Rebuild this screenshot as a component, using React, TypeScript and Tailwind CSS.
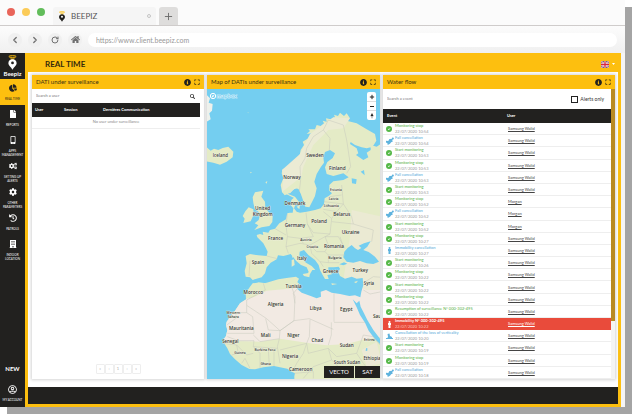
import React, { useState } from "react";
import type { IconType } from "react-icons";
import {
    FaBuilding,
    FaChartPie,
    FaCog,
    FaCogs,
    FaExpand,
    FaFile,
    FaHistory,
    FaHome,
    FaInfoCircle,
    FaMobileAlt,
    FaRegUserCircle,
    FaSearch
} from "react-icons/fa";
import { ChevronLeft, ChevronRight, Plus, RotateCw } from "lucide-react";

type EventKind = "go" | "fall" | "still" | "alert" | "lost";

interface IEvent {
    kind: EventKind;
    label: string;
    date: string;
    user: string;
}

const WALID = "Samsung Walid";

const events: IEvent[] = [
    { kind: "go", label: "Monitoring stop", date: "22/07/2020 10:54", user: WALID },
    { kind: "fall", label: "Fall cancellation", date: "22/07/2020 10:54", user: WALID },
    { kind: "go", label: "Start monitoring", date: "22/07/2020 10:53", user: WALID },
    { kind: "go", label: "Monitoring stop", date: "22/07/2020 10:53", user: WALID },
    { kind: "fall", label: "Fall cancellation", date: "22/07/2020 10:53", user: WALID },
    { kind: "go", label: "Start monitoring", date: "22/07/2020 10:53", user: WALID },
    { kind: "go", label: "Monitoring stop", date: "22/07/2020 10:52", user: "Morgan" },
    { kind: "fall", label: "Fall cancellation", date: "22/07/2020 10:52", user: "Morgan" },
    { kind: "go", label: "Start monitoring", date: "22/07/2020 10:52", user: "Morgan" },
    { kind: "go", label: "Monitoring stop", date: "22/07/2020 10:27", user: WALID },
    { kind: "still", label: "Immobility cancellation", date: "22/07/2020 10:27", user: WALID },
    { kind: "go", label: "Start monitoring", date: "22/07/2020 10:26", user: WALID },
    { kind: "go", label: "Monitoring stop", date: "22/07/2020 10:22", user: WALID },
    { kind: "go", label: "Start monitoring", date: "22/07/2020 10:22", user: WALID },
    { kind: "go", label: "Monitoring stop", date: "22/07/2020 10:22", user: WALID },
    { kind: "go", label: "Resumption of surveillance N° 000-302-495", date: "22/07/2020 10:22", user: WALID },
    { kind: "alert", label: "Immobility N° 000-302-495", date: "22/07/2020 10:22", user: WALID },
    { kind: "lost", label: "Cancellation of the loss of verticality", date: "22/07/2020 10:20", user: WALID },
    { kind: "go", label: "Start monitoring", date: "22/07/2020 10:19", user: WALID },
    { kind: "go", label: "Monitoring stop", date: "22/07/2020 10:19", user: WALID },
    { kind: "fall", label: "Fall cancellation", date: "22/07/2020 10:18", user: WALID }
];

const kindColors: Record<EventKind, string> = {
    go: "text-[#4fae3c]",
    fall: "text-[#4fa8d8]",
    still: "text-[#4fa8d8]",
    alert: "text-white font-bold",
    lost: "text-[#4fa8d8]"
};

const menu: { label: string; Icon: IconType; active?: boolean }[] = [
    { label: "REAL TIME", Icon: FaChartPie, active: true },
    { label: "REPORTS", Icon: FaFile },
    { label: "APPS MANAGEMENT", Icon: FaMobileAlt },
    { label: "SETTING UP ALERTS", Icon: FaCogs },
    { label: "OTHER PARAMETERS", Icon: FaCog },
    { label: "PATROLS", Icon: FaHistory },
    { label: "INDOOR LOCATION", Icon: FaBuilding }
];

const BeeLogo = ({ body, className }: { body: string; className: string }) => (
    <svg viewBox="0 0 24 32" className={className} aria-hidden="true">
        <ellipse cx="12" cy="3" rx="8" ry="2" fill="none" stroke="#fdbf0f" strokeWidth="2" />
        <path d="M7 7h10l-2 3H9z" fill="#fdbf0f" />
        <path
            d="M12 9c-5 0-9 3.6-9 8.5C3 22.5 8.500 25 12 32c3.500-7 9-9.500 9-14.500C21 12.600 17 9 12 9z"
            fill={body}
        />
        <circle cx="12" cy="17" r="3" fill={body === "#ffffff" ? "#22211f" : "#ffffff"} />
    </svg>
);

const EventIcon = ({ kind }: { kind: EventKind }) => {
    if (kind === "go")
        return (
            <svg viewBox="0 0 12 12" className="size-[6px]" aria-hidden="true">
                <circle cx="6" cy="6" r="6" fill="#55b848" />
                <path d="M4 6l2 1.500 2-3" fill="none" stroke="#fff" strokeWidth="1.500" />
            </svg>
        );
    if (kind === "fall")
        return (
            <svg viewBox="0 0 14 14" className="size-[8px]" aria-hidden="true">
                <circle cx="12" cy="2.500" r="1.800" fill="#5fb3de" />
                <path d="M0 6.500l4 .5 2-3.500 6-.5-1 3 1 2-3 1-2 3-4 2-.5-3L0 9.500z" fill="#5fb3de" />
            </svg>
        );
    if (kind === "lost")
        return (
            <svg viewBox="0 0 14 14" className="size-[7px]" aria-hidden="true">
                <path d="M3 2l4-1 1 5 4 2v2H3l1-3z" fill="#5fb3de" />
                <path d="M0 10h14v2H0z" fill="#5fb3de" />
            </svg>
        );
    const fill = kind === "alert" ? "#fff" : "#5fb3de";
    return (
        <svg viewBox="0 0 14 14" className="size-[7px]" aria-hidden="true">
            <circle cx="7" cy="2" r="2" fill={fill} />
            <path d="M4 4h6v4H9v6H5V8H4z" fill={fill} />
        </svg>
    );
};

const EuropeMap = () => {
    // [x, y, text, size]
    const labels: [number, number, string, number][] = [
        [61, 261, "Iceland", 13],
        [345, 262, "Sweden", 14],
        [412, 301, "Finland", 14],
        [276, 326, "Norway", 14],
        [408, 364, "Estonia", 10],
        [401, 391, "Latvia", 10],
        [394, 412, "Lithuania", 10],
        [285, 406, "Denmark", 14],
        [188, 421, "United", 14],
        [188, 438, "Kingdom", 14],
        [425, 439, "Belarus", 14],
        [357, 458, "Poland", 14],
        [285, 470, "Germany", 14],
        [452, 493, "Ukraine", 14],
        [227, 510, "France", 14],
        [318, 512, "Austria", 10],
        [337, 535, "Croatia", 10],
        [402, 533, "Romania", 14],
        [405, 566, "Bulgaria", 10],
        [306, 570, "Italy", 14],
        [174, 582, "Spain", 14],
        [392, 610, "Greece", 14],
        [481, 606, "Turkey", 14],
        [507, 645, "Syria", 13],
        [281, 654, "Tunisia", 14],
        [160, 671, "Morocco", 14],
        [227, 709, "Algeria", 14],
        [347, 719, "Libya", 14],
        [439, 724, "Egypt", 14],
        [100, 732, "Western", 10],
        [100, 744, "Sahara", 10],
        [124, 781, "Mauritania", 14],
        [197, 801, "Mali", 14],
        [280, 800, "Niger", 14],
        [352, 817, "Chad", 14],
        [440, 830, "Sudan", 14],
        [508, 813, "Eritrea", 10],
        [531, 743, "Sau", 14],
        [91, 819, "Senegal", 13],
        [195, 842, "Burkina Faso", 10],
        [120, 853, "Guinea", 10],
        [197, 884, "Ghana", 10],
        [270, 864, "Nigeria", 14],
        [441, 882, "South Sudan", 13],
        [516, 871, "Ethiopia", 13],
        [302, 902, "Cameroon", 14]
    ];

    return (
        <svg
            viewBox="21 57 519 870"
            preserveAspectRatio="xMidYMin slice"
            className="absolute inset-0 size-full"
            role="img"
            aria-label="Map of Europe and Africa"
        >
            <defs>
                <clipPath id="land">
                    <path
                        id="mainland"
                        d="M246 366 242 345 250 325 245 310 248 298 262 290 275 283 290 270 300 252 302 240 312 225 308 215 325 205 335 190 320 192 330 183 325 178 345 178 350 165 362 168 372 160 368 152 380 155 378 145 392 148 405 142 402 134 414 138 420 128 432 138 440 130 450 145 440 152 470 160 500 178 525 192 529 212 518 230 500 235 485 232 465 225 452 216 450 222 470 235 475 250 468 255 490 270 505 262 500 248 512 240 512 225 530 230 545 220 V930 H283 V918 L285 910 275 905 262 896 240 892 222 888 190 892 165 898 148 897 125 885 105 868 90 852 82 835 74 822 68 812 78 798 82 780 78 765 80 755 95 735 105 722 120 700 138 688 137 670 150 650 158 640 175 637 200 640 190 628 158 630 150 622 137 620 134 603 140 580 137 558 150 552 175 556 200 558 203 545 198 535 190 520 172 502 170 495 180 492 190 495 188 485 205 488 210 480 225 476 238 460 258 448 262 430 270 428 278 428 280 415 272 405 274 390 285 380 290 388 M285 380 300 400 310 350 250 366Z"
                    />
                </clipPath>
            </defs>
            <path d="M0 0h600v1000H0z" fill="#74cef0" />
            <use href="#mainland" fill="#e4ebc6" />
            <path
                d="M246 366 250 325 246 300 300 252 330 192 400 142 450 145 430 175 385 180 340 225 310 290 300 340 270 370Z"
                fill="#ebebd4"
            />
            <path
                d="M246 366 254 376 268 370 285 352 296 358 305 378 318 415 326 422 338 408 345 375 350 340 330 300Z"
                fill="#e4ebc6"
            />
            <g clipPath="url(#land)">
                <path
                    d="M60 730 135 690 180 656 260 640 300 648 480 640 545 610V800L500 806 440 822 380 826 330 820 240 806 180 815 60 812Z"
                    fill="#f2eae3"
                />
                <path d="M455 420 545 440V660H500L430 630 450 500Z" fill="#ebead3" />
                <path d="M150 668 190 640 280 635 285 655 200 662 160 682 138 686Z" fill="#e4ebc6" />
                <path d="M485 840 530 815 545 880 500 890Z" fill="#ece9d5" />
            </g>
            {/* Islands of the Atlantic */}
            <g fill="#e4ebc6">
                <path d="M165 367 190 362 184 380 195 395 196 415 206 426 218 440 217 456 208 468 185 472 163 480 175 466 164 460 176 450 179 438 175 425 164 416 160 398 158 382Z" />
                <path d="M146 412 160 418 161 434 152 454 130 459 134 446 128 438 136 424Z" />
                <path d="M20 232 32 242 42 236 55 240 68 234 85 230 100 245 98 262 80 275 60 284 40 278 20 274Z" />
                <path d="M20 75 30 85 26 98 38 102 36 122 28 130 32 148 20 155Z" fill="#eef1ec" />
                <path d="M143 127l3 1-2 2zM150 305l6 3-4 2zM196 337l6-4-2 8z" />
            </g>
            <g fill="#74cef0">
                {/* Baltic sea and gulf of Bothnia */}
                <path d="M375 246 390 240 405 250 398 264 382 276 375 292 380 312 400 318 430 310 446 322 430 330 400 334 388 345 388 362 396 370 386 378 374 385 372 402 362 415 345 420 320 425 300 428 290 425 282 415 288 400 294 406 300 398 297 385 290 372 296 362 306 382 316 410 328 412 336 396 345 378 350 355 343 335 350 312 362 292 372 278 370 262Z" />
                <path d="M455 325 470 328 468 342 456 340ZM482 305 492 300 494 316Z" />
                {/* Mediterranean */}
                <path d="M160 629 185 622 195 610 200 592 212 578 230 568 234 556 250 558 262 555 272 552 280 562 288 572 303 585 320 592 326 605 320 618 330 612 337 600 346 600 335 588 318 578 306 566 298 556 299 545 312 540 325 555 345 570 356 585 360 600 368 615 375 627 386 627 382 615 396 613 385 600 385 592 402 592 416 590 420 596 415 606 420 618 435 626 455 620 470 626 488 624 490 645 484 665 481 682 465 676 448 678 420 672 395 668 378 660 362 665 363 680 350 685 332 678 305 668 291 656 300 645 292 636 297 626 288 620 265 623 235 628 200 638 178 635 164 640Z" />
                {/* Black sea */}
                <path d="M440 575 430 562 433 545 442 535 455 525 465 535 474 540 484 534 476 527 492 520 512 514 502 530 490 540 506 546 525 560 537 575 520 582 500 580 480 573 460 578Z" />
                <path d="M418 583l14-6 10 4-12 5z" />
                {/* Red sea */}
                <path d="M458 688 470 700 478 692 482 710 492 730 502 750 520 780 540 806V822L525 808 506 782 495 758 480 735 470 712Z" />
                <path d="M498 835l4-1v8l-5 1z" />
            </g>
            <path
                d="M308 612 330 608 328 622 312 618ZM275 590 284 585 282 568 275 570ZM276 565 283 556 279 546ZM394 640 412 642 396 645ZM462 636 474 632 468 640ZM322 395 328 385 326 400Z M290 410 300 404 298 418Z"
                fill="#e4ebc6"
            />
            <g fill="none" stroke="#c6c9bd" strokeWidth="1.500" strokeLinejoin="round">
                <path d="M298 365 302 330 300 290 315 265 320 235 340 200 370 180 385 150 430 165M370 180 390 205 388 240M430 165 440 210 452 290 440 310" />
                <path d="M388 380 425 375M372 395 430 402M370 418 410 425M425 345 430 402 455 440M395 445 410 425 430 402" />
                <path d="M318 428 322 462 340 488 390 492 395 445 370 425M395 455 460 462 455 440M460 462 520 480 515 515M262 432 258 465 262 500 300 505 340 500 322 462M225 476 258 495M262 500 258 530 265 550M258 530 300 520 330 525 375 500 390 492M300 505 310 520M330 525 335 550 360 575 370 590M375 500 385 525 375 545 385 555 435 555M375 500 415 500 435 535M385 555 385 578 418 578M360 575 385 578M420 500 430 530M150 572 147 618M200 558 232 566M335 530 350 545 375 545" />
                <path d="M488 640 520 620 545 622M490 660 510 672 545 665M500 650 505 635" />
                <path d="M190 640 196 660 140 690 140 706 200 746 240 782 282 752 285 680 275 650M285 700 280 670 292 656M240 782 282 752 328 746 400 778M402 670V755M402 757H495M330 748 328 800 320 820M394 757V795L385 825M140 706V728H108V745L80 765M140 728 158 740 162 790H82M197 746 205 780 240 782 238 806 180 815 160 795M238 806 232 830 240 880M82 800 115 812 162 812 160 830 180 850 180 895M68 820 110 825 115 850 95 855M110 825 140 855 160 850M160 830 232 835M205 838 208 888M222 840 222 888M240 840 320 820 310 850 290 880 280 900M320 820 325 850 385 835 395 870 340 890 310 925M385 835 410 860 470 850 490 880M470 850 490 795 520 800 540 825M395 870 430 905M283 910 340 905V925M125 880 135 865 150 895M490 880 510 905 545 910" />
            </g>
            <g
                fill="#33352f"
                stroke="#f6f5ea"
                strokeWidth="2"
                strokeLinejoin="round"
                textAnchor="middle"
                fontFamily="'Open Sans', sans-serif"
                fontWeight="600"
                paintOrder="stroke"
            >
                {labels.map(([x, y, text, size]) => (
                    <text key={text} x={x} y={y} fontSize={size}>
                        {text}
                    </text>
                ))}
            </g>
            <g fill="none" stroke="#fff" strokeWidth="3">
                <circle cx="39" cy="78" r="8" />
                <path d="M36 82l1-5 5-2-2 5z" fill="#fff" strokeWidth="1" />
            </g>
            <text
                x="50"
                y="83"
                fontSize="17"
                fill="#74cef0"
                stroke="#fff"
                strokeWidth="2"
                paintOrder="stroke"
                fontFamily="Lato, sans-serif"
                fontWeight="700"
            >
                mapbox
            </text>
        </svg>
    );
};

const Card = ({ title, children }: { title: string; children: React.ReactNode }) => (
    <section className="flex min-w-0 flex-col bg-white shadow-[0_0_3px_1px_#d4d4d4]">
        <header className="flex h-[14px] shrink-0 items-center gap-[3px] bg-[#fdbf0f] px-[4px] text-[#3b3213]">
            <h2 className="grow text-[6px] leading-[8px]">{title}</h2>
            <button aria-label={`About ${title}`}>
                <FaInfoCircle className="size-[7px] text-[#22211f]" />
            </button>
            <button aria-label={`Expand ${title}`}>
                <FaExpand className="size-[6px]" />
            </button>
        </header>
        {children}
    </section>
);

const BrowserBar = () => (
    <div className="shrink-0 bg-[#f9f9f9]">
        <div className="flex h-[26px] items-end border-b border-[#cfcccb] bg-[#fbfbfb]">
            <div className="flex h-[26px] w-[53px] items-center gap-[7px] pl-[7px]">
                <span className="size-[8px] rounded-full bg-[#e9655a]" />
                <span className="size-[8px] rounded-full bg-[#fbcb58]" />
                <span className="size-[8px] rounded-full bg-[#62bd5b]" />
            </div>
            <div className="flex h-[18px] w-[103px] items-center rounded-t-[3px] bg-[#f5f5f5] px-[5px]">
                <BeeLogo body="#22211f" className="mr-[5px] h-[11px] w-[8px]" />
                <span className="grow text-[8px] leading-[10px] text-[#555]">BEEPIZ</span>
                <span className="size-[4px] rounded-full border border-[#c4c4c4]" />
            </div>
            <button
                aria-label="New tab"
                className="ml-[3px] flex h-[18px] w-[19px] items-center justify-center rounded-t-[3px] bg-[#dedddc] text-[#6a6a6a]"
            >
                <Plus className="size-[11px]" strokeWidth={2} />
            </button>
        </div>
        <div className="flex h-[27px] items-center gap-[6px] bg-gradient-to-b from-[#fcfcfc] to-[#f0f0f0] px-[8px] text-[#707070]">
            <button aria-label="Back" className="flex size-[14px] items-center justify-center rounded-full bg-[#f0f0f0]">
                <ChevronLeft className="size-[10px]" strokeWidth={3} />
            </button>
            <button aria-label="Forward" className="flex size-[14px] items-center justify-center rounded-full bg-[#f0f0f0]">
                <ChevronRight className="size-[10px]" strokeWidth={3} />
            </button>
            <button aria-label="Reload" className="flex size-[14px] items-center justify-center rounded-full bg-[#f0f0f0]">
                <RotateCw className="size-[8px]" strokeWidth={3} />
            </button>
            <button aria-label="Home" className="flex size-[14px] items-center justify-center rounded-full bg-[#f0f0f0]">
                <FaHome className="size-[9px]" />
            </button>
            <input
                aria-label="Address"
                defaultValue="https://www.client.beepiz.com"
                className="h-[14px] min-w-0 grow rounded-full bg-white px-[8px] text-[7px] text-[#999]"
            />
        </div>
    </div>
);

const Sidebar = () => (
    <nav className="flex w-[25px] shrink-0 flex-col items-center bg-[#22211f] text-white">
        <div className="flex h-[26px] w-full shrink-0 flex-col items-center pt-[2px]">
            <BeeLogo body="#ffffff" className="h-[15px] w-[11px]" />
            <span className="text-[6px] font-bold leading-[8px]">Beepiz</span>
        </div>
        {menu.map(({ label, Icon, active }) => (
            <a
                key={label}
                href="#"
                className={`flex h-[26px] w-full shrink-0 flex-col items-center gap-[5px] pt-[5px] text-center text-[3px] leading-[4px] ${
                    active ? "bg-[#fdbf0f] text-[#22211f]" : ""
                }`}
            >
                <Icon className="size-[8px] shrink-0" />
                {label}
            </a>
        ))}
        <a href="#" className="mb-[12px] mt-auto text-[6px] font-bold leading-[8px]">
            NEW
        </a>
        <a href="#" className="mb-[5px] flex flex-col items-center gap-[4px] text-[3px] leading-[4px]">
            <FaRegUserCircle className="size-[9px]" />
            MY ACCOUNT
        </a>
    </nav>
);

const UsersCard = () => (
    <Card title="DATI under surveillance">
        <div className="flex h-[14px] shrink-0 items-center pl-[4px] pr-[9px]">
            <input
                aria-label="Search a user"
                placeholder="Search a user"
                className="min-w-0 grow text-[4px] leading-[6px] placeholder:text-[#777]"
            />
            <button aria-label="Search">
                <FaSearch className="size-[5px] text-[#333]" />
            </button>
        </div>
        <div className="pr-[4px]">
            <table className="w-full table-fixed text-left text-[4px] leading-[6px]">
                <thead>
                    <tr className="h-[14px] bg-[#22211f] text-white">
                        <th className="w-[29px] pl-[3px]">User</th>
                        <th className="w-[39px] pl-[3px]">Session</th>
                        <th className="pl-[3px]">Dernières Communication</th>
                    </tr>
                </thead>
                <tbody>
                    <tr className="h-[11px] border-b border-[#eee]">
                        <td colSpan={3} className="text-center text-[#888]">
                            No user under surveillance
                        </td>
                    </tr>
                </tbody>
            </table>
        </div>
        <div className="mb-[5px] mt-auto flex justify-center text-[4px] leading-[6px] text-[#aaa]">
            {["«", "‹", "1", "›", "»"].map((page) => (
                <button key={page} className="h-[10px] w-[9px] rounded-[1px] border border-[#eee]">
                    {page}
                </button>
            ))}
        </div>
    </Card>
);

const MapCard = () => (
    <Card title="Map of DATIs under surveillance">
        <div className="relative grow overflow-hidden">
            <EuropeMap />
            <div className="absolute right-[4px] top-[3px] flex flex-col divide-y divide-[#ddd] rounded-[2px] bg-white text-[#222]">
                <button aria-label="Zoom in" className="flex h-[10px] w-[9px] items-center justify-center">
                    <Plus className="size-[6px]" strokeWidth={4} />
                </button>
                <button aria-label="Zoom out" className="flex h-[9px] w-[9px] items-center justify-center">
                    <span className="h-px w-[4px] bg-[#222]" />
                </button>
                <button aria-label="Reset north" className="flex h-[9px] w-[9px] items-center justify-center">
                    <svg viewBox="0 0 10 10" className="size-[6px]">
                        <path d="M5 0l2.500 5h-5z" fill="#222" />
                        <path d="M5 10l2.500-5h-5z" fill="#bbb" />
                    </svg>
                </button>
            </div>
            <div className="absolute bottom-[1px] right-0 flex gap-px text-[6px] leading-[8px] text-white">
                <button className="h-[12px] w-[30px] bg-[#22211f]">VECTO</button>
                <button className="h-[12px] w-[25px] bg-[#22211f]">SAT</button>
            </div>
        </div>
    </Card>
);

const EventsCard = () => {
    const [alertsOnly, setAlertsOnly] = useState(false);
    const rows = alertsOnly ? events.filter((event) => event.kind === "alert") : events;

    return (
        <Card title="Water flow">
            <div className="flex grow">
                <div className="min-w-0 grow">
                    <div className="flex h-[20px] items-center pl-[4px] pr-[7px]">
                        <input
                            aria-label="Search a event"
                            placeholder="Search a event"
                            className="min-w-0 grow text-[4px] leading-[6px] placeholder:text-[#777]"
                        />
                        <label className="flex items-center gap-[2px] text-[5px] leading-[6px] text-[#333]">
                            <input
                                type="checkbox"
                                checked={alertsOnly}
                                onChange={(e) => setAlertsOnly(e.target.checked)}
                                className="size-[7px] appearance-none border border-[#222] checked:bg-[#222]"
                            />
                            Alerts only
                        </label>
                    </div>
                    <table
                        className={`w-full table-fixed text-left text-[4px] leading-[6px] ${
                            alertsOnly ? "" : "h-[270px]"
                        }`}
                    >
                        <colgroup>
                            <col className="w-[11px]" />
                            <col className="w-[110px]" />
                            <col />
                        </colgroup>
                        <thead>
                            <tr className="h-[14px] bg-[#22211f] text-white">
                                <th colSpan={2} className="pl-[4px]">
                                    Event
                                </th>
                                <th className="pl-[3px]">User</th>
                            </tr>
                        </thead>
                        <tbody>
                            {rows.map((event, index) => (
                                <tr
                                    key={index}
                                    className={
                                        event.kind === "alert"
                                            ? "bg-[#e94b3b] text-white"
                                            : "text-[#444] shadow-[inset_0_-1px_0_#eee]"
                                    }
                                >
                                    <td className="pl-[3px]">
                                        <EventIcon kind={event.kind} />
                                    </td>
                                    <td className="whitespace-nowrap pl-px">
                                        <div className={kindColors[event.kind]}>{event.label}</div>
                                        <div className={event.kind === "alert" ? "text-[#f9c3bc]" : "text-[#999]"}>
                                            {event.date}
                                        </div>
                                    </td>
                                    <td className="pl-[4px]">
                                        <a href="#" className="underline">
                                            {event.user}
                                        </a>
                                    </td>
                                </tr>
                            ))}
                        </tbody>
                    </table>
                </div>
                <div className="w-[4px] shrink-0 bg-[#f4f4f4]">
                    <div className="h-[80%] bg-[#b98a22]" />
                </div>
            </div>
        </Card>
    );
};

export default () => (
    <div className="flex h-screen min-h-[414px] flex-col bg-white pb-[7px] pr-[7px] font-['Lato',sans-serif]">
        <div className="flex min-h-0 grow flex-col bg-[#f5f5f5] shadow-[7px_7px_0_#a4a4a4]">
            <BrowserBar />
            <div className="mr-[4px] flex grow bg-[#fdbf0f]">
                <Sidebar />
                <main className="flex min-w-0 grow flex-col px-[3px] pb-[3px]">
                    <div className="flex h-[19px] shrink-0 items-center justify-between pl-[17px] pr-[3px] pt-[3px]">
                        <h1 className="text-[8px] font-bold leading-[10px] text-[#33290c]">REAL TIME</h1>
                        <button aria-label="Language" className="flex items-center gap-[3px]">
                            <svg viewBox="0 0 24 20" className="h-[7px] w-[8px]">
                                <path d="M0 0h24v20H0z" fill="#2f4388" />
                                <path d="M0 0l24 20M24 0L0 20" stroke="#fff" strokeWidth="4" />
                                <path d="M0 0l24 20M24 0L0 20" stroke="#d8263c" strokeWidth="1.500" />
                                <path d="M12 0v20M0 10h24" stroke="#fff" strokeWidth="7" />
                                <path d="M12 0v20M0 10h24" stroke="#d8263c" strokeWidth="4" />
                            </svg>
                            <svg viewBox="0 0 6 4" className="h-[2px] w-[3px]">
                                <path d="M0 0h6L3 4z" fill="#fff" />
                            </svg>
                        </button>
                    </div>
                    <div className="grid grow grid-cols-[172fr_173fr_232fr] gap-[3px] bg-white pb-[8px] pl-[4px] pr-[3px] pt-[3px]">
                        <UsersCard />
                        <MapCard />
                        <EventsCard />
                    </div>
                    <footer className="h-[17px] shrink-0 bg-[#22211f]" />
                </main>
            </div>
        </div>
    </div>
);
